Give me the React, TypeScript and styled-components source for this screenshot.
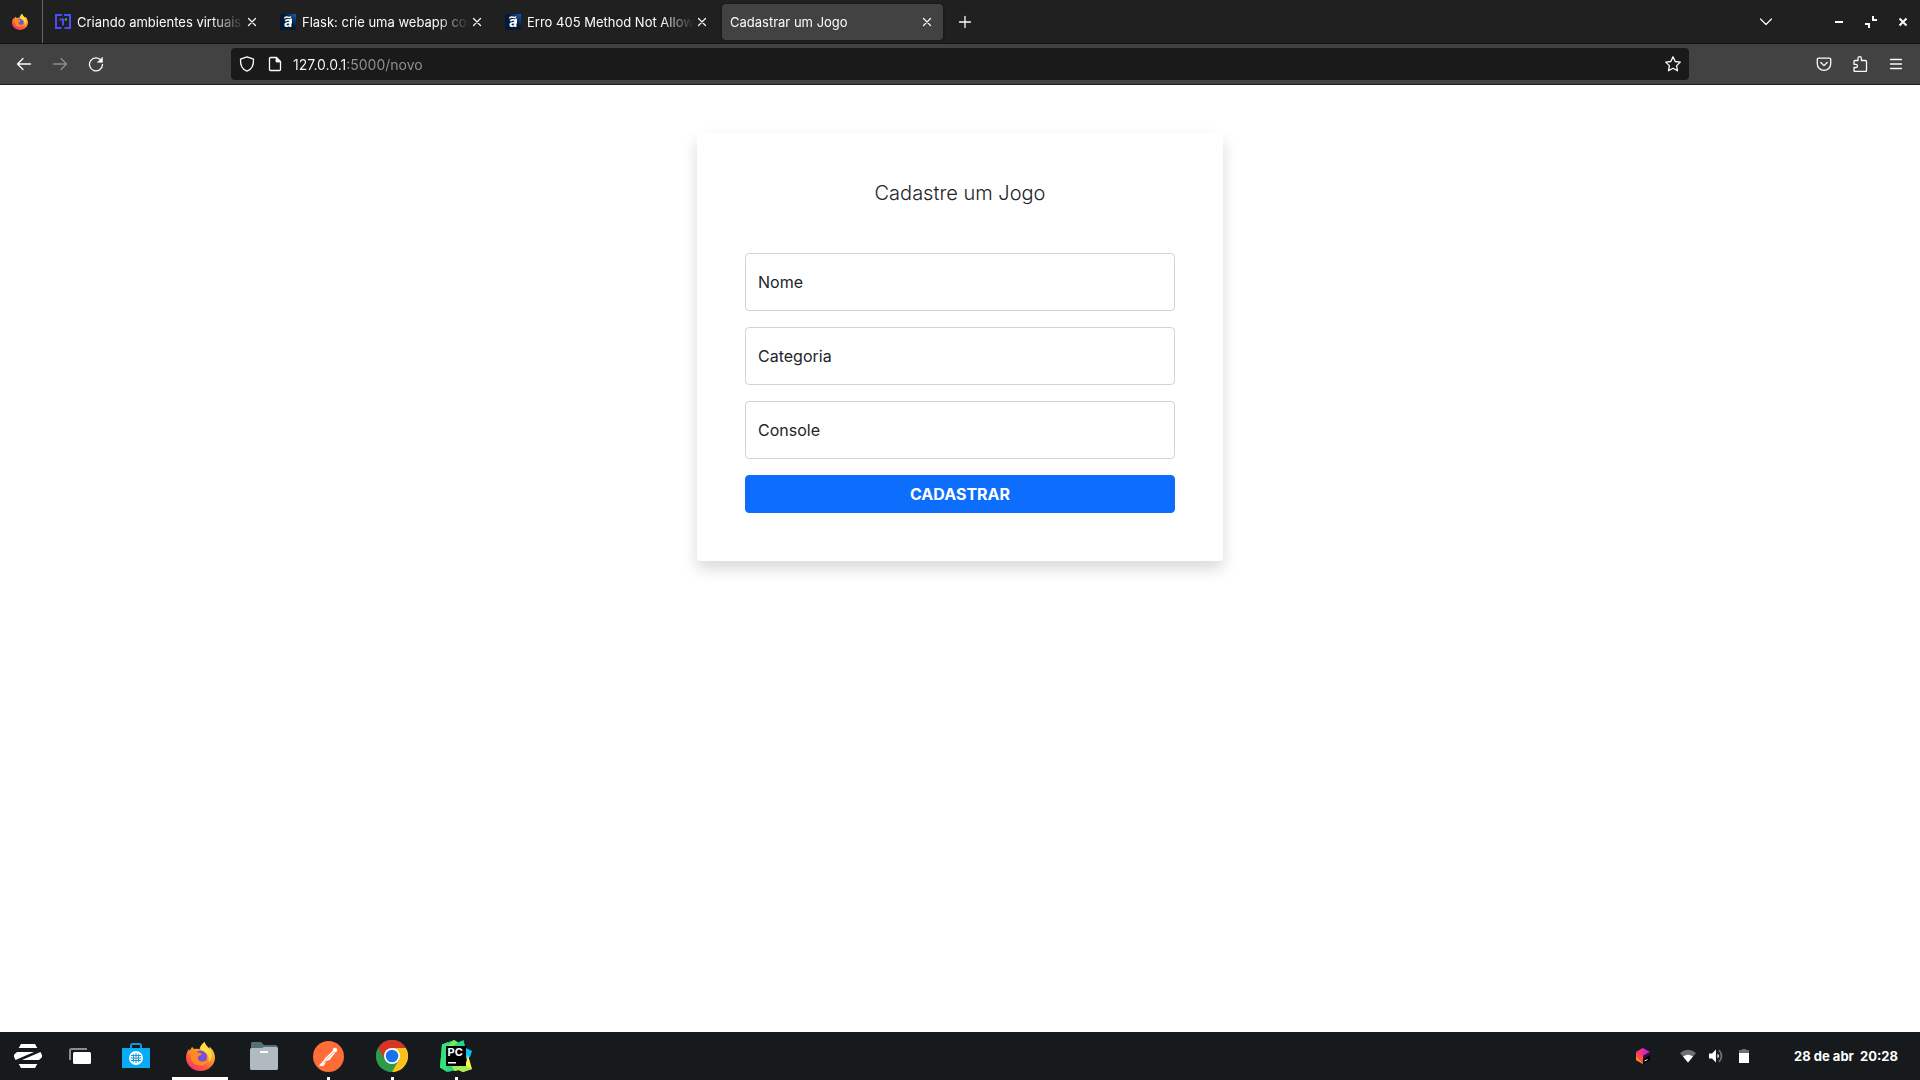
import React, { useState } from "react";
import styled, { createGlobalStyle } from "styled-components";

const GlobalStyle = createGlobalStyle`
  *, *::before, *::after { box-sizing: border-box; }
  body {
    margin: 0;
    background: #fff;
    color: #212529;
    font-family: Inter, "Liberation Sans", sans-serif;
    font-size: 16px;
    line-height: 24px;
  }
  button, input { font: inherit; color: inherit; }
`;

const Screen = styled.div`
  display: flex;
  flex-direction: column;
  min-height: 100vh;
`;

/* ---------- Browser chrome ---------- */

const TabBar = styled.header`
  display: flex;
  align-items: center;
  height: 44px;
  background: #202020;
  border-bottom: 1px solid #141414;
  color: #fbfbfe;
`;

const PinnedTab = styled.button`
  display: flex;
  align-items: center;
  align-self: stretch;
  width: 43px;
  margin-right: 4px;
  padding: 0 0 0 12px;
  border: 0;
  border-right: 1px solid #646464;
  background: none;
`;

const Tabs = styled.nav`
  display: flex;
  gap: 4px;
`;

const Tab = styled.div<{ $active?: boolean }>`
  display: flex;
  align-items: center;
  width: 221px;
  height: 36px;
  padding: 0 8px;
  border-radius: 4px;
  background: ${(p) => (p.$active ? "#424242" : "transparent")};
  box-shadow: ${(p) => (p.$active ? "0 0 3px rgba(0, 0, 0, 0.5)" : "none")};
`;

const TabTitle = styled.button`
  display: flex;
  flex: 1;
  align-items: center;
  gap: 6px;
  min-width: 0;
  padding: 0;
  border: 0;
  background: none;
  font-size: 13px;
  line-height: 20px;
  text-align: left;
`;

const TabText = styled.span`
  flex: 1;
  overflow: hidden;
  white-space: nowrap;
  mask-image: linear-gradient(to left, transparent, #000 32px);
`;

const IconButton = styled.button<{ $size?: number; $dim?: boolean }>`
  display: flex;
  flex: none;
  align-items: center;
  justify-content: center;
  width: ${(p) => p.$size ?? 36}px;
  height: ${(p) => Math.min(p.$size ?? 36, 36)}px;
  padding: 0;
  border: 0;
  background: none;
  opacity: ${(p) => (p.$dim ? 0.4 : 1)};
`;

const WindowControls = styled.div`
  display: flex;
  align-items: center;
  margin-left: auto;
  padding-right: 1px;
`;

const ListTabs = styled.div`
  display: flex;
  margin-right: 39px;
`;

const Toolbar = styled.div`
  display: flex;
  align-items: center;
  height: 41px;
  padding: 0 6px 1px;
  background: #424242;
  border-bottom: 1px solid #1c1c1c;
  color: #fbfbfe;
`;

const Spacer = styled.div`
  flex: 0 1 117px;
`;

const UrlBar = styled.form`
  display: flex;
  flex: 1;
  align-items: center;
  height: 32px;
  padding: 0 2px;
  border-radius: 4px;
  background: #1a1a1a;
`;

const UrlInput = styled.input`
  flex: 1;
  min-width: 0;
  margin-left: 4px;
  padding: 2px 0 0;
  border: 0;
  outline: 0;
  background: linear-gradient(90deg, #fbfbfe 54px, #949494 54px);
  background-clip: text;
  -webkit-background-clip: text;
  color: transparent;
  font-size: 14px;
  line-height: 24px;
`;

/* ---------- Page ---------- */

const Page = styled.main`
  display: flex;
  flex: 1;
  align-items: flex-start;
  justify-content: center;
  padding: 48px 12px;
`;

const Card = styled.form`
  display: flex;
  flex-direction: column;
  gap: 16px;
  width: 100%;
  max-width: 526px;
  padding: 48px;
  border-radius: 4px;
  background: #fff;
  box-shadow: 0 8px 16px rgba(0, 0, 0, 0.15);
`;

const Title = styled.h5`
  margin: 0 0 32px;
  font-size: 20px;
  font-weight: 300;
  line-height: 24px;
  text-align: center;
`;

const Field = styled.div`
  position: relative;
`;

const FieldInput = styled.input`
  display: block;
  width: 100%;
  height: 58px;
  padding: 16px 12px;
  border: 1px solid #ced4da;
  border-radius: 4px;
  background: #fff;
`;

const FieldLabel = styled.label`
  position: absolute;
  top: 0;
  left: 0;
  padding: 17px 13px;
  pointer-events: none;
`;

const Submit = styled.button`
  padding: 6px 12px;
  border: 1px solid #0d6efd;
  border-radius: 4px;
  background: #0d6efd;
  color: #fff;
  font-weight: 700;
  text-transform: uppercase;
`;

/* ---------- Desktop panel ---------- */

const Taskbar = styled.footer`
  display: flex;
  align-items: center;
  justify-content: space-between;
  height: 48px;
  background: #161a1d;
  color: #fff;
`;

const PanelStart = styled.div`
  display: flex;
  gap: 8px;
  margin-right: 12px;
`;

const Launchers = styled.div`
  display: flex;
  gap: 8px;
  margin-right: auto;
`;

const Launcher = styled.button<{ $width?: number; $mark?: number }>`
  display: flex;
  align-items: center;
  justify-content: center;
  width: ${(p) => p.$width ?? 56}px;
  height: 48px;
  padding: 0;
  border: 0;
  background: linear-gradient(#fff, #fff) no-repeat bottom / ${(p) => p.$mark ?? 0}px 3px;
`;

const Tray = styled.div`
  display: flex;
  align-items: center;
  padding-right: 22px;
`;

const TrayApp = styled.div`
  display: flex;
  margin-right: 17px;
`;

const Clock = styled.time`
  margin-left: 36px;
  font-size: 13px;
  font-weight: 700;
  line-height: 20px;
  white-space: pre;
`;

/* ---------- Icons ---------- */

type LineProps = { d: string; size?: number; width?: number; children?: React.ReactNode };

function Line({ d, size = 16, width = 1.3, children }: LineProps) {
  return (
    <svg width={size} height={size} viewBox="0 0 16 16" fill="none" stroke="currentColor"
      strokeWidth={width} strokeLinecap="round" strokeLinejoin="round" aria-hidden="true">
      <path d={d} />
      {children}
    </svg>
  );
}

function FirefoxIcon({ size, id }: { size: number; id: string }) {
  return (
    <svg width={size} height={size} viewBox="0 0 28 28" aria-hidden="true">
      <defs>
        <linearGradient id={`${id}-body`} x1="0.8" y1="0.05" x2="0.25" y2="1">
          <stop offset="0" stopColor="#ffd83b" />
          <stop offset="0.4" stopColor="#ff9a2b" />
          <stop offset="0.7" stopColor="#ff5a3c" />
          <stop offset="1" stopColor="#f0326f" />
        </linearGradient>
      </defs>
      <path fill={`url(#${id}-body)`} d="M18 0c.4 2.800 3 4.600 4.400 6.500.4-.7.3-1.200.1-2 3 2 5.500 6 5.500 10.500 0 7.300-6.200 13-14 13S0 22.300 0 15c0-3.600 1.500-6.600 3-8.500.1 1 .3 1.500.6 2C4.200 7 5.300 6 5.900 4.600c.7 1.200 1.400 1.900 2.400 2.200 2-.5 3.500-.4 4.700.2C13.600 4.200 15.500 1.800 18 0z" />
      <circle cx="14" cy="14.500" r="6.300" fill="#7a50d8" />
      <path fill="#ff8a24" d="M3.200 9.500c3-1.500 6.500-1 8.300.6 2 .4 3.300.6 3.500 1.500-.2 1.300-2.600 1.500-3.500 2.800-.5 3.200 2.300 5 5.300 4.400 2-.4 3.200-1.600 4.200-1.400-1.100 3.600-4 5.200-7.300 5.200-5 0-8.700-3.500-9-8-.1-2-.5-3.700-1.500-5.100z" />
      <path fill="#ffdc42" d="M18 0c.4 2.800 3 4.600 4.400 6.500 1.900 2.700 2.700 5.200 2.300 8-.4 2.300-1.500 4-3 5 1-3.200.2-6.700-2-8.700-2-1.700-4.800-2.500-6-4C13.700 4 15.500 1.800 18 0z" />
    </svg>
  );
}

function BracketsIcon() {
  return (
    <svg width="16" height="16" viewBox="0 0 16 16" fill="none" aria-hidden="true">
      <path d="M7 1H1v13h5.500M9 1h6v13H9.500" stroke="#4b4df5" strokeWidth="2" />
      <path d="M4.500 5.500H9.500M8 5v6.500" stroke="#4b4df5" strokeWidth="2" />
      <path d="M10 5.500h2" stroke="#22c55e" strokeWidth="2" />
    </svg>
  );
}

const FaviconLetter = styled.text`
  font-family: Inter, sans-serif;
  font-size: 14px;
  font-weight: 700;
`;

function AluraIcon() {
  return (
    <svg width="16" height="16" viewBox="0 0 16 16" aria-hidden="true">
      <defs>
        <linearGradient id="alura" x1="1" y1="0" x2="0.55" y2="0.4">
          <stop offset="0" stopColor="#0c5fc0" />
          <stop offset="1" stopColor="#051933" />
        </linearGradient>
      </defs>
      <rect width="16" height="16" fill="url(#alura)" />
      <FaviconLetter x="8" y="13" textAnchor="middle" fill="#fff">a</FaviconLetter>
      <path d="M4.500 4.500C5 2.800 6.500 2.800 8 3.200S10.500 3.500 11 2.500" stroke="#fff" strokeWidth="1.500" fill="none" />
      <path d="M11 4.500v5" stroke="#fff" strokeWidth="1.800" />
    </svg>
  );
}

const CloseIcon = () => <Line d="M4.500 4.500l7 7M11.500 4.500l-7 7" width={1.2} />;

function ZorinIcon() {
  return (
    <svg width="28" height="24" viewBox="0 0 28 24" fill="#fff" aria-hidden="true">
      <path d="M7 0h14l2.300 4H4.700zM7 24h14l2.300-4H4.700z" />
      <path d="M3 8h17L1.500 16 .3 13.500a3 3 0 010-3zM25 16H8l18.500-8 1.200 2.500a3 3 0 010 3z" />
    </svg>
  );
}

function WindowsIcon() {
  return (
    <svg width="22" height="16" viewBox="0 0 22 16" aria-hidden="true">
      <path d="M1 12V2.500Q1 1 2.500 1H18" fill="none" stroke="#8b8d8e" strokeWidth="2" />
      <rect x="4" y="4" width="18" height="12" rx="1.500" fill="#fff" />
    </svg>
  );
}

function StoreIcon() {
  return (
    <svg width="28" height="26" viewBox="0 0 28 26" aria-hidden="true">
      <path d="M9 6V2.500Q9 1 10.500 1h7Q19 1 19 2.500V6" fill="none" stroke="#0a9be0" strokeWidth="2" />
      <rect y="5" width="28" height="20" rx="1" fill="#08abf6" />
      <circle cx="14" cy="15" r="7" fill="#fff" />
      <path d="M11.500 11v8M14 10v10M16.500 11v8M9 12.500h10M8.500 15h11M9 17.500h10" stroke="#1b9be0" strokeWidth="1" />
    </svg>
  );
}

function FilesIcon() {
  return (
    <svg width="28" height="28" viewBox="0 0 28 28" aria-hidden="true">
      <path d="M1 9V1.500Q1 0 2.500 0H11l3 3h12q1.500 0 1.500 1.500V9z" fill="#546e7a" />
      <path d="M0 7.500Q0 6 1.500 6H12l2-1h12.500Q28 5 28 6.500v20q0 1.500-1.500 1.500h-25Q0 28 0 26.500z" fill="#b0bac0" />
      <rect x="10" y="9" width="8" height="2" fill="#fff" />
    </svg>
  );
}

function PostmanIcon() {
  return (
    <svg width="31" height="31" viewBox="0 0 31 31" aria-hidden="true">
      <circle cx="15.500" cy="15.500" r="15.500" fill="#ff6c37" />
      <circle cx="22" cy="9" r="2.300" fill="#fff" />
      <path d="M20 9.500L11.500 17.500l1.500 2.500 3.500-1 6-7.500z" fill="#fff" />
      <path d="M12.500 18.500L7 24.500" stroke="#fff" strokeWidth="1.600" strokeLinecap="round" />
      <path d="M6.500 25h4l3-5z" fill="#fff" />
      <path d="M13 18.500l7.500-7M20.500 11l1.500 1" stroke="#ff6c37" strokeWidth=".6" />
    </svg>
  );
}

function ChromeIcon() {
  return (
    <svg width="32" height="32" viewBox="0 0 32 32" aria-hidden="true">
      <circle cx="16" cy="16" r="16" fill="#2c9a48" />
      <path d="M16 16L9.100 20 2.140 8A16 16 0 0129.860 8z" fill="#d93527" />
      <path d="M16 8h13.860A16 16 0 0116 32l6.930-12z" fill="#fcc21b" />
      <path d="M2.140 8l6.930 12L16 24l-2 7.900A16 16 0 012.140 8z" fill="#2c9a48" />
      <circle cx="16" cy="16" r="8" fill="#fff" />
      <circle cx="16" cy="16" r="6.300" fill="#1a73e8" />
    </svg>
  );
}

const PyCharmLetters = styled.text`
  font-family: Inter, sans-serif;
  font-size: 11px;
  font-weight: 700;
`;

function PyCharmIcon() {
  return (
    <svg width="32" height="32" viewBox="0 0 32 32" aria-hidden="true">
      <path d="M2 4.500L14 0l4 2.500L23.500 0l2 8-3 20L8 32l-8-4.500z" fill="#21d789" />
      <path d="M2 4.500L8 2l-1 30-7-4.500z" fill="#35e27a" />
      <path d="M14 0l4 2.500L12 7l-7 1z" fill="#7cec4a" />
      <path d="M24 7l8 4-2 6-6 3z" fill="#07c3f2" />
      <path d="M14 31l3-6 9-2 2-8 4 14-9 3-4-2z" fill="#fcf84a" />
      <path d="M12 26h14l6 3-9 3-5-2-4 1z" fill="#a5ec52" />
      <rect x="6" y="6" width="20" height="20" fill="#000" />
      <PyCharmLetters x="7.500" y="16" fill="#fff">PC</PyCharmLetters>
      <rect x="8" y="22" width="8" height="1.500" fill="#fff" />
    </svg>
  );
}

function ToolboxIcon() {
  return (
    <svg width="16" height="16" viewBox="0 0 16 16" aria-hidden="true">
      <path d="M8 0l7 4-7 5-7-5z" fill="#c32cc4" />
      <path d="M1 4l7-4v8z" fill="#fb2f73" />
      <path d="M1 4l7 4v8l-7-4z" fill="#ff4b47" />
      <path d="M1 8l7 8-7-4z" fill="#ff8a1c" />
      <path d="M15 4v8l-7 4V8z" fill="#000" />
      <path d="M15 4v3L8 11V8z" fill="#3c0a3a" />
      <path d="M9.500 13l3-1.500" stroke="#fff" />
    </svg>
  );
}

function WifiIcon() {
  return (
    <svg width="16" height="16" viewBox="0 0 16 16" aria-hidden="true">
      <path d="M0 5q8-6.500 16 0l-8 9.500z" fill="#6d7072" />
      <path d="M3 8.500q5-3.500 10 0l-5 6z" fill="#fff" />
    </svg>
  );
}

function VolumeIcon() {
  return (
    <svg width="16" height="16" viewBox="0 0 16 16" fill="none" aria-hidden="true">
      <path d="M1 5.500h3L8 1.500v13l-4-4H1z" fill="#fff" />
      <path d="M9.500 5.500q3 2.500 0 5z" fill="#fff" />
      <path d="M11 2q5 6 0 12" stroke="#6d7072" strokeWidth="1.800" />
    </svg>
  );
}

function BatteryIcon() {
  return (
    <svg width="16" height="16" viewBox="0 0 16 16" aria-hidden="true">
      <path d="M6 1h4v1h3v3H3V2h3z" fill="#6d7072" />
      <rect x="3" y="5" width="10" height="10" fill="#fff" />
    </svg>
  );
}

/* ---------- Data ---------- */

const tabs = [
  { title: "Criando ambientes virtuais", icon: <BracketsIcon /> },
  { title: "Flask: crie uma webapp com", icon: <AluraIcon /> },
  { title: "Erro 405 Method Not Allow", icon: <AluraIcon /> },
  { title: "Cadastrar um Jogo", active: true },
];

const fields = [
  { id: "nome", label: "Nome" },
  { id: "categoria", label: "Categoria" },
  { id: "console", label: "Console" },
];

const apps = [
  { name: "Software", icon: <StoreIcon /> },
  { name: "Firefox", icon: <FirefoxIcon size={29} id="dock" />, mark: 56 },
  { name: "Arquivos", icon: <FilesIcon /> },
  { name: "Postman", icon: <PostmanIcon />, mark: 3 },
  { name: "Chrome", icon: <ChromeIcon />, mark: 3 },
  { name: "PyCharm", icon: <PyCharmIcon />, mark: 3 },
];

export default function App() {
  const [url, setUrl] = useState("127.0.0.1:5000/novo");

  return (
    <Screen>
      <GlobalStyle />
      <TabBar>
        <PinnedTab aria-label="Firefox View"><FirefoxIcon size={16} id="view" /></PinnedTab>
        <Tabs aria-label="Abas">
          {tabs.map((tab) => (
            <Tab key={tab.title} $active={tab.active}>
              <TabTitle>{tab.icon}<TabText>{tab.title}</TabText></TabTitle>
              <IconButton $size={16} aria-label="Fechar aba"><CloseIcon /></IconButton>
            </Tab>
          ))}
        </Tabs>
        <IconButton $size={44} aria-label="Nova aba"><Line d="M8 2.500v11M2.500 8h11" /></IconButton>
        <WindowControls>
          <ListTabs>
            <IconButton aria-label="Listar abas"><Line d="M2.500 5L8 10.500 13.500 5" width={1.2} /></IconButton>
          </ListTabs>
          <IconButton $size={32} aria-label="Minimizar">
            <svg width="16" height="16" viewBox="0 0 16 16" fill="currentColor"><path d="M4 7h8v2H4z" /></svg>
          </IconButton>
          <IconButton $size={32} aria-label="Restaurar">
            <svg width="16" height="16" viewBox="0 0 16 16" fill="none" stroke="currentColor" strokeWidth="2"><path d="M10 2v4h4M2 10h4v4" /></svg>
          </IconButton>
          <IconButton $size={32} aria-label="Fechar">
            <svg width="16" height="16" viewBox="0 0 16 16" stroke="currentColor" strokeWidth="2"><path d="M4.500 4.500l7 7M11.500 4.500l-7 7" /></svg>
          </IconButton>
        </WindowControls>
      </TabBar>

      <Toolbar>
        <IconButton aria-label="Voltar"><Line d="M14.500 8H1.500M7 2.500L1.500 8 7 13.500" /></IconButton>
        <IconButton $dim aria-label="Avançar"><Line d="M1.500 8h13M9 2.500L14.500 8 9 13.500" /></IconButton>
        <IconButton aria-label="Recarregar">
          <Line d="M13.200 4.500A6.500 6.500 0 1014.500 8.500">
            <path d="M14.500 1.500v4.800H9.700z" fill="currentColor" strokeWidth=".6" />
          </Line>
        </IconButton>
        <Spacer />
        <UrlBar onSubmit={(e) => e.preventDefault()}>
          <IconButton $size={28} type="button" aria-label="Proteção">
            <Line d="M8 .8L1.500 3.200C1.200 9 3.500 13.500 8 15.200c4.500-1.700 6.800-6.200 6.500-12z" />
          </IconButton>
          <IconButton $size={28} type="button" aria-label="Informações do site">
            <Line d="M9.500 1.500H3.500a1 1 0 00-1 1v11a1 1 0 001 1h9a1 1 0 001-1V5.500z">
              <path d="M9 1.500v4.500h4.500z" fill="currentColor" strokeWidth=".8" />
            </Line>
          </IconButton>
          <UrlInput aria-label="Endereço" spellCheck={false} value={url} onChange={(e) => setUrl(e.target.value)} />
          <IconButton $size={28} type="button" aria-label="Favoritar">
            <Line d="M8 .8l2.200 4.700 5.100.6-3.700 3.500.9 5.200L8 12.300l-4.500 2.500.9-5.200L.7 6.100l5.100-.6z" />
          </IconButton>
        </UrlBar>
        <Spacer />
        <IconButton aria-label="Salvar no Pocket">
          <Line d="M2.500 2.200h11a1.200 1.200 0 011.200 1.200V8A6.700 6.300 0 011.300 8V3.400a1.200 1.200 0 011.200-1.200z">
            <path d="M4.800 6.500L8 9.600l3.200-3.100" />
          </Line>
        </IconButton>
        <IconButton aria-label="Extensões">
          <Line d="M2 5.500a1 1 0 011-1h3V2.400a1.700 1.700 0 013.400 0v2.100H13.500a1 1 0 011 1v9a1 1 0 01-1 1H3a1 1 0 01-1-1V11.500h1.800a1.600 1.600 0 000-3.200H2z" />
        </IconButton>
        <IconButton aria-label="Menu"><Line d="M2.500 3.500h11M2.500 8h11M2.500 12.500h11" /></IconButton>
      </Toolbar>

      <Page>
        <Card onSubmit={(e) => e.preventDefault()}>
          <Title>Cadastre um Jogo</Title>
          {fields.map((f) => (
            <Field key={f.id}>
              <FieldInput id={f.id} name={f.id} type="text" />
              <FieldLabel htmlFor={f.id}>{f.label}</FieldLabel>
            </Field>
          ))}
          <Submit type="submit">Cadastrar</Submit>
        </Card>
      </Page>

      <Taskbar>
        <PanelStart>
          <Launcher aria-label="Menu Zorin"><ZorinIcon /></Launcher>
          <Launcher $width={32} aria-label="Janelas"><WindowsIcon /></Launcher>
        </PanelStart>
        <Launchers>
          {apps.map((app) => (
            <Launcher key={app.name} $mark={app.mark} aria-label={app.name}>{app.icon}</Launcher>
          ))}
        </Launchers>
        <Tray>
          <TrayApp><IconButton $size={28} aria-label="JetBrains Toolbox"><ToolboxIcon /></IconButton></TrayApp>
          <IconButton $size={28} aria-label="Wi-Fi"><WifiIcon /></IconButton>
          <IconButton $size={28} aria-label="Volume"><VolumeIcon /></IconButton>
          <IconButton $size={28} aria-label="Bateria"><BatteryIcon /></IconButton>
          <Clock>28 de abr  20:28</Clock>
        </Tray>
      </Taskbar>
    </Screen>
  );
}
